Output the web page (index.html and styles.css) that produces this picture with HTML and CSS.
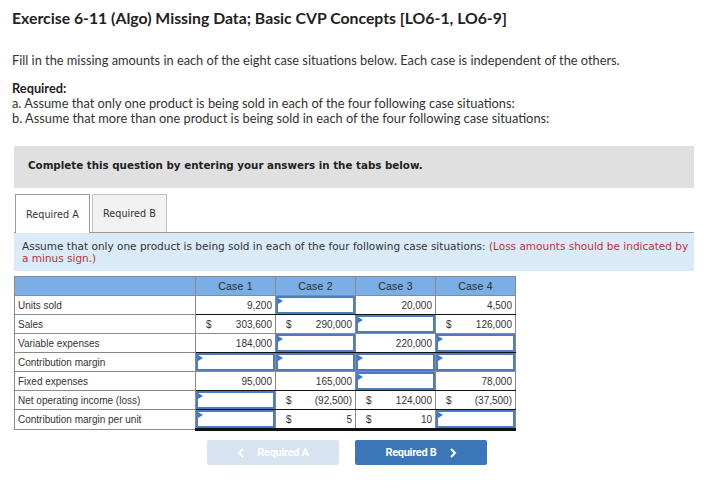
FILE: index.html
```html
<!DOCTYPE html>
<html>
<head>
<meta charset="utf-8">
<link rel="stylesheet" href="styles.css">
</head>
<body>
<div class="page">
  <h1 class="title">Exercise 6-11 (Algo) Missing Data; Basic CVP Concepts [LO6-1, LO6-9]</h1>
  <p class="intro">Fill in the missing amounts in each of the eight case situations below. Each case is independent of the others.</p>
  <div class="req">
    <div class="req-head">Required:</div>
    <div>a. Assume that only one product is being sold in each of the four following case situations:</div>
    <div>b. Assume that more than one product is being sold in each of the four following case situations:</div>
  </div>
  <div class="panel">
    <div class="notice">Complete this question by entering your answers in the tabs below.</div>
    <div class="tabs">
      <div class="tab active">Required A</div>
      <div class="tab">Required B</div>
    </div>
    <div class="instr">Assume that only one product is being sold in each of the four following case situations: <span class="red">(Loss amounts should be indicated by a minus sign.)</span></div>
    <table class="grid">
      <thead>
        <tr><th class="lbl"></th><th>Case 1</th><th>Case 2</th><th>Case 3</th><th>Case 4</th></tr>
      </thead>
      <tbody>
        <tr class="bk">
          <td class="lbl">Units sold</td>
          <td><div class="val"><span></span><span>9,200</span></div></td>
          <td><div class="inp"></div></td>
          <td><div class="val"><span></span><span>20,000</span></div></td>
          <td><div class="val"><span></span><span>4,500</span></div></td>
        </tr>
        <tr>
          <td class="lbl">Sales</td>
          <td><div class="val"><span>$</span><span>303,600</span></div></td>
          <td><div class="val"><span>$</span><span>290,000</span></div></td>
          <td><div class="inp"></div></td>
          <td><div class="val"><span>$</span><span>126,000</span></div></td>
        </tr>
        <tr class="bk">
          <td class="lbl">Variable expenses</td>
          <td><div class="val"><span></span><span>184,000</span></div></td>
          <td><div class="inp"></div></td>
          <td><div class="val"><span></span><span>220,000</span></div></td>
          <td><div class="inp"></div></td>
        </tr>
        <tr>
          <td class="lbl">Contribution margin</td>
          <td><div class="inp"></div></td>
          <td><div class="inp"></div></td>
          <td><div class="inp"></div></td>
          <td><div class="inp"></div></td>
        </tr>
        <tr class="bk">
          <td class="lbl">Fixed expenses</td>
          <td><div class="val"><span></span><span>95,000</span></div></td>
          <td><div class="val"><span></span><span>165,000</span></div></td>
          <td><div class="inp"></div></td>
          <td><div class="val"><span></span><span>78,000</span></div></td>
        </tr>
        <tr class="bk">
          <td class="lbl">Net operating income (loss)</td>
          <td><div class="inp"></div></td>
          <td><div class="val"><span>$</span><span>(92,500)</span></div></td>
          <td><div class="val"><span>$</span><span>124,000</span></div></td>
          <td><div class="val"><span>$</span><span>(37,500)</span></div></td>
        </tr>
        <tr class="last">
          <td class="lbl">Contribution margin per unit</td>
          <td><div class="inp"></div></td>
          <td><div class="val"><span>$</span><span>5</span></div></td>
          <td><div class="val"><span>$</span><span>10</span></div></td>
          <td><div class="inp"></div></td>
        </tr>
      </tbody>
    </table>
    <div class="nav">
      <div class="btn disabled"><svg class="chev" width="8" height="10" viewBox="0 0 8 10"><path d="M6 1 L2 5 L6 9" fill="none" stroke="#ffffff" stroke-width="2"/></svg>Required A</div>
      <div class="btn primary">Required B<svg class="chev right" width="8" height="10" viewBox="0 0 8 10"><path d="M2 1 L6 5 L2 9" fill="none" stroke="#ffffff" stroke-width="2"/></svg></div>
    </div>
  </div>
</div>
</body>
</html>
```

FILE: styles.css
```css
html, body {
  margin: 0;
  padding: 0;
  background: #ffffff;
}
.page {
  padding: 8px 12px 0 12px;
  font-family: "Lato", "Open Sans", sans-serif;
  color: #2b2b2b;
}
.title {
  margin: 0;
  font-size: 15.8px;
  line-height: 20px;
  font-weight: 700;
  color: #222;
}
.intro {
  margin: 25px 0 0 0;
  font-size: 12.8px;
  line-height: 15px;
  color: #333;
}
.req {
  margin-top: 13px;
  font-size: 12.8px;
  line-height: 15px;
  color: #333;
}
.req-head {
  font-weight: 700;
  color: #222;
}
.panel {
  margin: 20px 7px 0 2px;
}
.notice {
  background: #e0e0e0;
  height: 42px;
  box-sizing: border-box;
  padding: 0 0 5px 14px;
  display: flex;
  align-items: center;
  font-family: "DejaVu Sans", Verdana, sans-serif;
  font-weight: 700;
  font-size: 10.3px;
  color: #222;
}
.tabs {
  display: flex;
  gap: 2px;
  margin-top: 6px;
  padding-left: 1px;
  border-bottom: 1px solid #9a9a9a;
}
.tab {
  width: 73px;
  height: 37px;
  display: flex;
  align-items: center;
  justify-content: center;
  border: 1px solid #c2c2c2;
  border-bottom: none;
  background: #f2f2f2;
  font-family: "DejaVu Sans", Verdana, sans-serif;
  font-size: 9.7px;
  color: #333;
}
.tab.active {
  background: #fff;
  border-color: #9a9a9a;
  height: 38px;
  margin-bottom: -1px;
}
.instr {
  background: #d9eaf8;
  padding: 7px 3px 7px 8px;
  font-family: "DejaVu Sans", Verdana, sans-serif;
  font-size: 10.5px;
  line-height: 12px;
  color: #333;
}
.red {
  color: #c0313a;
}
.grid {
  margin-top: 5px;
  border-collapse: collapse;
  font-family: "Liberation Sans", Arial, sans-serif;
  font-size: 10px;
  color: #333;
  border-left: 1px solid #8a8a8a;
}
.grid th {
  background: #7aaee4;
  height: 18px;
  font-weight: 400;
  font-size: 10.5px;
  letter-spacing: 0.2px;
  color: #2a2a2a;
  border: 1px solid #8a8a8a;
  width: 79px;
  padding: 0;
}
.grid th.lbl {
  width: 180px;
}
.grid td {
  height: 18px;
  padding: 0;
  border-right: 1px solid #8a8a8a;
  border-bottom: 1px solid #8a8a8a;
}
.grid td.lbl {
  padding-left: 3px;
  border-right: 1px solid #8a8a8a;
}
.grid tr.bk td:not(.lbl) {
  border-bottom: 1px solid #111;
}
.grid tr.last td {
  border-bottom: 3px solid #111;
}
.grid tr.last td.lbl {
  border-bottom: 1px solid #8a8a8a;
}
.val {
  display: flex;
  justify-content: space-between;
  padding: 0 3px 0 10px;
}
.inp {
  position: relative;
  height: 14px;
  margin: 0;
  border: 2px solid #4a7cc0;
}
.inp::before {
  content: "";
  position: absolute;
  left: 0;
  top: 0;
  border-top: 3px solid transparent;
  border-bottom: 3px solid transparent;
  border-left: 5px solid #3a79c9;
}
.nav {
  display: flex;
  gap: 16px;
  margin: 9px 0 0 193px;
}
.btn {
  width: 132px;
  height: 25px;
  border-radius: 2px;
  display: flex;
  align-items: center;
  justify-content: center;
  font-family: "Roboto", sans-serif;
  font-weight: 700;
  font-size: 11px;
  color: #fff;
  letter-spacing: -0.3px;
}
.btn.disabled {
  background: #d8e3f1;
}
.btn.primary {
  background: #3a76b8;
}
.chev {
  margin-right: 12px;
}
.chev.right {
  margin-right: 0;
  margin-left: 12px;
}
```
